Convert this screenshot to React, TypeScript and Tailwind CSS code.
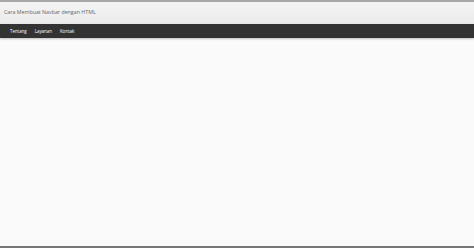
export default function App() {
  return (
    <div className="flex h-[248px] w-full flex-col bg-[#fafafa]" style={{ fontFamily: '"Open Sans", "Liberation Sans", sans-serif' }}>
      {/* Header */}
      <div className="flex h-[24px] shrink-0 items-center border-t-2 border-[#a8a8a8] bg-gradient-to-b from-[#f4f4f4] to-[#ebebeb] px-[4px]">
        <h1 className="text-[5.3px] leading-none text-[#666]">Cara Membuat Navbar dengan HTML</h1>
      </div>

      {/* Navbar */}
      <nav className="flex h-[14px] shrink-0 items-center gap-[8px] bg-[#333] px-[10px] shadow-[0_1px_2px_rgba(0,0,0,0.25)]">
        <a className="text-[4.4px] leading-none text-white">Tentang</a>
        <a className="text-[4.4px] leading-none text-white">Layanan</a>
        <a className="text-[4.4px] leading-none text-white">Kontak</a>
      </nav>

      {/* Konten */}
      <main className="flex-1" />

      <div className="h-[2px] shrink-0 bg-[#777]" />
    </div>
  )
}
